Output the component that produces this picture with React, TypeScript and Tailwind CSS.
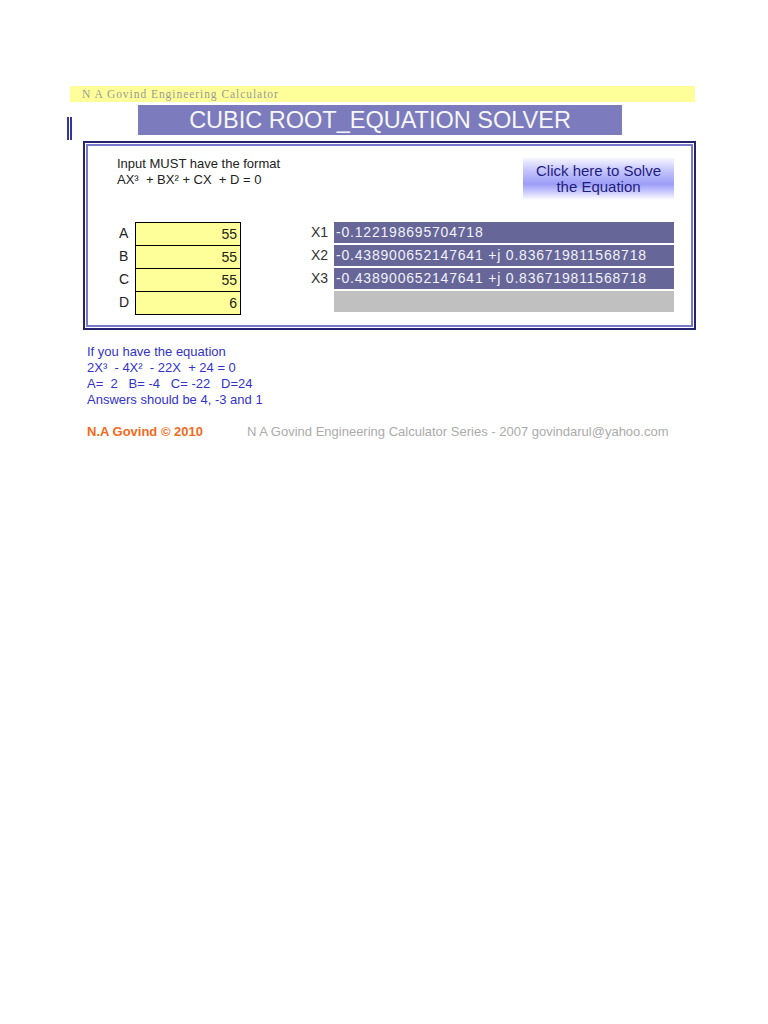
import React from "react";

const inputs = [
  { l: "A", v: "55" },
  { l: "B", v: "55" },
  { l: "C", v: "55" },
  { l: "D", v: "6" },
];

const results = [
  { l: "X1", v: "-0.122198695704718" },
  { l: "X2", v: "-0.438900652147641 +j 0.836719811568718" },
  { l: "X3", v: "-0.438900652147641 +j 0.836719811568718" },
];

export default function App() {
  return (
    <div className="min-h-[1024px] w-[768px] bg-white pt-[86px] pl-[67px] font-['Liberation_Sans',Arial,sans-serif]">
      <div className="ml-[3px] h-[16px] w-[625px] bg-[#ffff99] pl-[12px] font-['Liberation_Serif','Times_New_Roman',serif] text-[11.5px] leading-[16px] tracking-[0.95px] text-[#9a9a9a]">
        N A Govind Engineering Calculator
      </div>

      <div className="mt-[3px] flex items-start">
        <div className="mt-[12px] h-[23px] w-[5px] border-x-2 border-[#333399]" />
        <div className="ml-[66px] h-[30px] w-[484px] bg-[#7b7bbd] text-center text-[23.5px] leading-[30px] text-[#f6f6f6]">
          CUBIC ROOT_EQUATION SOLVER
        </div>
      </div>

      <div className="ml-[16px] mt-[1px] h-[189px] w-[613px] border-2 border-[#23236e] p-[1px]">
        <div className="h-full w-full border-2 border-[#7777cc] pl-[29px] pt-[10px]">
          <div className="flex items-start justify-between pr-[17px]">
            <div className="text-[13px] leading-[16px] text-[#222]">
              <div>Input MUST have the format</div>
              <div>
                AX³ &nbsp;+ BX² + CX &nbsp;+ D = 0
              </div>
            </div>
            <div className="mt-[2px] flex h-[42px] w-[151px] flex-col items-center justify-center bg-[linear-gradient(to_bottom,#f6f6ff_0%,#c4c4ff_30%,#9d9df7_62%,#c8c8ff_80%,#ffffff_100%)] text-[15px] leading-[16px] text-[#1e1e80]">
              <div>Click here to Solve</div>
              <div>the Equation</div>
            </div>
          </div>

          <div className="mt-[22px] flex items-start">
            <div className="flex flex-col">
              {inputs.map((r, i) => (
                <div key={r.l} className="flex h-[23px] items-stretch">
                  <div className="w-[18px] pl-[2px] text-[14px] leading-[23px] text-[#222]">{r.l}</div>
                  <div
                    className={
                      i === inputs.length - 1
                        ? "h-[24px] w-[106px] border border-black bg-[#ffff99] pr-[3px] text-right text-[14px] leading-[22px] text-[#222]"
                        : "h-[23px] w-[106px] border-x border-t border-black bg-[#ffff99] pr-[3px] text-right text-[14px] leading-[22px] text-[#222]"
                    }
                  >
                    {r.v}
                  </div>
                </div>
              ))}
            </div>

            <div className="ml-[70px] flex flex-col gap-[2px]">
              {results.map((r) => (
                <div key={r.l} className="flex h-[21px] items-stretch">
                  <div className="w-[23px] pl-[-1px] text-[14px] leading-[21px] text-[#333]">{r.l}</div>
                  <div className="w-[340px] bg-[#666699] pl-[2px] text-[14px] leading-[21px] tracking-[0.8px] text-[#f2f2f8]">
                    {r.v}
                  </div>
                </div>
              ))}
              <div className="flex h-[21px]">
                <div className="w-[23px]" />
                <div className="w-[340px] bg-[#c0c0c0]" />
              </div>
            </div>
          </div>
        </div>
      </div>

      <div className="ml-[20px] mt-[14px] text-[13px] leading-[16px] text-[#3333cc]">
        <div>If you have the equation</div>
        <div>2X³ &nbsp;- 4X² &nbsp;- 22X &nbsp;+ 24 = 0</div>
        <div>A= &nbsp;2 &nbsp;&nbsp;B= -4 &nbsp;&nbsp;C= -22 &nbsp;&nbsp;D=24</div>
        <div>Answers should be 4, -3 and 1</div>
      </div>

      <div className="ml-[20px] mt-[16px] flex items-baseline">
        <div className="w-[160px] text-[13px] font-bold leading-[16px] text-[#f26a1b]">N.A Govind © 2010</div>
        <div className="text-[13px] leading-[16px] text-[#ababab]">
          N A Govind Engineering Calculator Series - 2007 govindarul@yahoo.com
        </div>
      </div>
    </div>
  );
}
